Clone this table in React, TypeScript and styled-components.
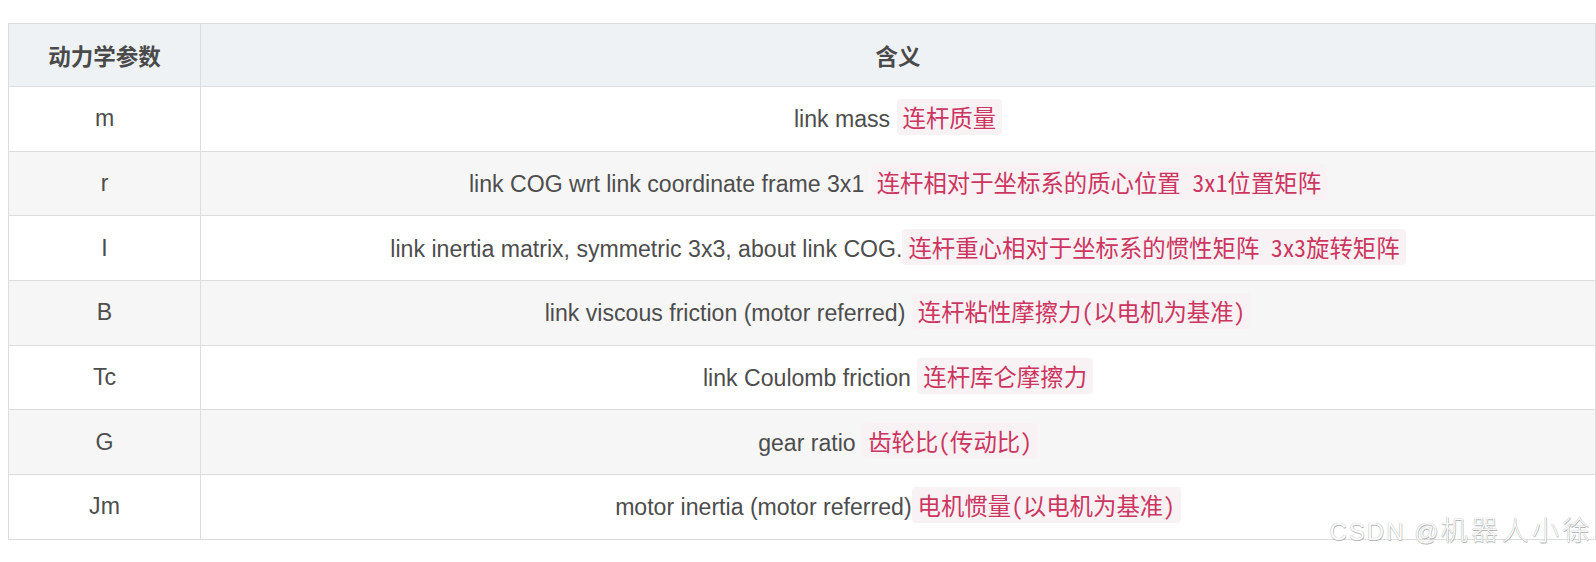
import React from "react";
import styled, { createGlobalStyle } from "styled-components";

const Global = createGlobalStyle`
  html, body {
    margin: 0;
    background: #ffffff;
  }
  body {
    padding: 23px 0 0 8px;
    overflow: hidden;
    font-family: "Liberation Sans", Arial, "Noto Sans CJK SC", sans-serif;
  }
`;

const Page = styled.div`
  position: relative;
  width: 1588px;
  height: 539px;
`;

const Table = styled.table`
  width: 1588px;
  border-collapse: collapse;
  table-layout: fixed;
  font-size: 23.1px;
  color: #4d4d4d;
`;

const HeadRow = styled.tr`
  height: 63px;
  background: #eef2f5;
`;

const HeadCell = styled.th<{ $w?: number }>`
  box-sizing: border-box;
  border: 1px solid #dddddd;
  padding: 0 10px;
  font-weight: 700;
  text-align: center;
  color: #4a4a4a;
  font-size: 22.5px;
  font-family: "Noto Sans CJK SC", "Liberation Sans", sans-serif;
  ${(p) => (p.$w ? `width: ${p.$w}px;` : "")}
`;

const Row = styled.tr<{ $striped: boolean }>`
  height: 64.7px;
  background: ${(p) => (p.$striped ? "#f6f6f6" : "#ffffff")};
`;

const Cell = styled.td`
  border: 1px solid #dddddd;
  padding: 0 10px;
  text-align: center;
  vertical-align: middle;
  line-height: 33px;
`;

const Code = styled.code`
  font-family: "Noto Sans Mono CJK SC", "Liberation Mono", "Noto Sans CJK SC", monospace;
  font-size: 23.4px;
  color: #cc3560;
  background: #f9f2f4;
  border-radius: 4px;
  padding: 1px 6px;
  white-space: nowrap;
`;

const Watermark = styled.div`
  position: absolute;
  right: 3px;
  top: 491px;
  line-height: 30px;
  color: #fafafa;
  text-shadow: 0 0 1px #a0a0a0, 0.5px 0.5px 0.5px #b8b8b8;
  pointer-events: none;
  white-space: nowrap;
`;

const MarkLatin = styled.span`
  font-family: "Liberation Sans", sans-serif;
  font-size: 24px;
  letter-spacing: 2px;
`;

const MarkCjk = styled.span`
  font-family: "Noto Sans CJK SC", sans-serif;
  font-weight: 300;
  font-size: 27px;
  letter-spacing: 3.5px;
`;

type Item = { sym: string; text: string; code: string; space: boolean };

const rows: Item[] = [
  { sym: "m", text: "link mass", code: "连杆质量", space: true },
  { sym: "r", text: "link COG wrt link coordinate frame 3x1", code: "连杆相对于坐标系的质心位置 3x1位置矩阵", space: true },
  { sym: "I", text: "link inertia matrix, symmetric 3x3, about link COG.", code: "连杆重心相对于坐标系的惯性矩阵 3x3旋转矩阵", space: false },
  { sym: "B", text: "link viscous friction (motor referred)", code: "连杆粘性摩擦力(以电机为基准)", space: true },
  { sym: "Tc", text: "link Coulomb friction", code: "连杆库仑摩擦力", space: true },
  { sym: "G", text: "gear ratio", code: "齿轮比(传动比)", space: true },
  { sym: "Jm", text: "motor inertia (motor referred)", code: "电机惯量(以电机为基准)", space: false },
];

export default function App() {
  return (
    <Page>
      <Global />
      <Table>
        <thead>
          <HeadRow>
            <HeadCell $w={192}>动力学参数</HeadCell>
            <HeadCell>含义</HeadCell>
          </HeadRow>
        </thead>
        <tbody>
          {rows.map((r, i) => (
            <Row key={r.sym} $striped={i % 2 === 1}>
              <Cell>{r.sym}</Cell>
              <Cell>
                {r.text}
                {r.space ? " " : ""}
                <Code>{r.code}</Code>
              </Cell>
            </Row>
          ))}
        </tbody>
      </Table>
      <Watermark>
        <MarkLatin>CSDN @</MarkLatin>
        <MarkCjk>机器人小徐</MarkCjk>
      </Watermark>
    </Page>
  );
}
